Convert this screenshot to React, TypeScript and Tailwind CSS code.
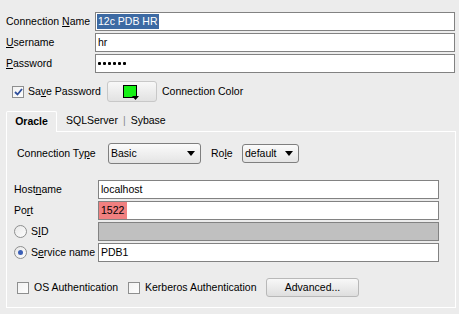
import React from "react";

const field = "flex-1 h-full border border-[#828282] bg-white flex items-center px-[2px]";

function Check({ checked }: { checked?: boolean }) {
  return (
    <div className="w-[12px] h-[12px] border border-[#8e8f8f] bg-gradient-to-br from-[#f2f2f2] to-[#fdfdfd] flex items-center justify-center shrink-0">
      {checked && (
        <svg width="9" height="8" viewBox="0 0 9 8">
          <path d="M1 4 L3.5 6.5 L8 1" fill="none" stroke="#2f4f9c" strokeWidth="1.8" />
        </svg>
      )}
    </div>
  );
}

function Radio({ checked }: { checked?: boolean }) {
  return (
    <div className="w-[13px] h-[13px] rounded-full border border-[#8e8f8f] bg-gradient-to-br from-[#e8e8e8] to-[#fdfdfd] flex items-center justify-center shrink-0">
      {checked && <div className="w-[5px] h-[5px] rounded-full bg-[#3b5fb6]" />}
    </div>
  );
}

function Combo({ value, w, h }: { value: string; w: string; h: string }) {
  return (
    <div
      className={`${w} ${h} border border-[#7f7f7f] rounded-[3px] bg-gradient-to-b from-[#fbfbfb] to-[#e4e4e4] flex items-center justify-between pl-[2px] pr-[5px]`}
    >
      <span>{value}</span>
      <svg width="8" height="5" viewBox="0 0 8 5">
        <path d="M0 0 H8 L4 5 Z" fill="#000" />
      </svg>
    </div>
  );
}

export default function App() {
  return (
    <div className="w-[459px] h-[314px] bg-[#ececec] pl-[6px] pr-[4px] pt-[12px] text-[10.5px] text-black whitespace-nowrap font-['Liberation_Sans',Arial,sans-serif] overflow-hidden">
      <div className="flex flex-col gap-[2px]">
        <div className="flex h-[19px] items-center">
          <span className="w-[89px]">
            Connection <u>N</u>ame
          </span>
          <div className={field}>
            <span className="bg-[#3d6aa3] text-white leading-[15px] px-px -ml-px">12c PDB HR</span>
          </div>
        </div>
        <div className="flex h-[19px] items-center">
          <span className="w-[89px]">
            <u>U</u>sername
          </span>
          <div className={field}>hr</div>
        </div>
        <div className="flex h-[19px] items-center">
          <span className="w-[89px]">
            <u>P</u>assword
          </span>
          <div className={`${field} gap-[2px]`}>
            {[0, 1, 2, 3, 4, 5].map((i) => (
              <div key={i} className="w-[3px] h-[3px] rounded-[1px] bg-black" />
            ))}
          </div>
        </div>
      </div>

      <div className="mt-[8px] h-[21px] flex items-center">
        <div className="w-[101px] pl-[6px] flex items-center gap-[4px]">
          <Check checked />
          <span>
            Sa<u>v</u>e Password
          </span>
        </div>
        <div className="w-[50px] h-[21px] border border-[#c8c8c8] rounded-[3px] bg-gradient-to-b from-[#f8f8f8] to-[#e2e2e2] flex items-center justify-center">
          <div className="relative w-[14px] h-[13px] border border-black bg-[#16f016] -ml-[4px]">
            <svg className="absolute -right-[3px] -bottom-[3px]" width="7" height="4" viewBox="0 0 7 4">
              <path d="M0 0 H7 L3.5 4 Z" fill="#000" />
            </svg>
          </div>
        </div>
        <span className="ml-[5px]">Connection Color</span>
      </div>

      <div className="mt-[9px] flex items-end h-[20px]">
        <div className="relative z-10 w-[51px] h-[21px] -mb-px border-t border-l border-r border-white bg-[#ececec] rounded-t-[2px] flex items-center justify-center font-bold">
          Oracle
        </div>
        <span className="pl-[9px] h-[20px] flex items-center">SQLServer</span>
        <span className="px-[5px] h-[20px] flex items-center text-[#8a8a8a]">|</span>
        <span className="h-[20px] flex items-center">Sybase</span>
      </div>

      <div className="w-[450px] h-[177px] border border-white pt-[11px]">
        <div className="flex items-center h-[21px] pl-[10px]">
          <span className="w-[91px]">
            Connection Ty<u>p</u>e
          </span>
          <Combo value="Basic" w="w-[93px]" h="h-[21px]" />
          <span className="ml-[10px] w-[31px]">
            Ro<u>l</u>e
          </span>
          <Combo value="default" w="w-[57px]" h="h-[19px]" />
        </div>

        <div className="mt-[16px] pl-[7px] pr-[16px] flex flex-col gap-[2px]">
          <div className="flex h-[19px] items-center">
            <span className="w-[84px]">
              Host<u>n</u>ame
            </span>
            <div className={field}>localhost</div>
          </div>
          <div className="flex h-[19px] items-center">
            <span className="w-[84px]">
              Po<u>r</u>t
            </span>
            <div className="flex-1 h-full border border-[#828282] bg-white flex items-center">
              <span className="bg-[#f08080] h-full flex items-center px-[2px] w-[28px]">1522</span>
            </div>
          </div>
          <div className="flex h-[19px] items-center">
            <div className="w-[84px] flex items-center gap-[4px]">
              <Radio />
              <span>
                S<u>I</u>D
              </span>
            </div>
            <div className="flex-1 h-full border border-[#828282] bg-[#c0c0c0]" />
          </div>
          <div className="flex h-[19px] items-center">
            <div className="w-[84px] flex items-center gap-[4px]">
              <Radio checked />
              <span>
                S<u>e</u>rvice name
              </span>
            </div>
            <div className={field}>PDB1</div>
          </div>
        </div>

        <div className="mt-[16px] pl-[10px] flex items-center h-[19px]">
          <div className="w-[111px] flex items-center gap-[5px]">
            <Check />
            <span>OS Authentication</span>
          </div>
          <div className="w-[138px] flex items-center gap-[5px]">
            <Check />
            <span>Kerberos Authentication</span>
          </div>
          <div className="w-[93px] h-[19px] border border-[#b8b8b8] rounded-[3px] bg-gradient-to-b from-[#f8f8f8] to-[#dedede] flex items-center justify-center">
            Advanced...
          </div>
        </div>
      </div>
    </div>
  );
}
